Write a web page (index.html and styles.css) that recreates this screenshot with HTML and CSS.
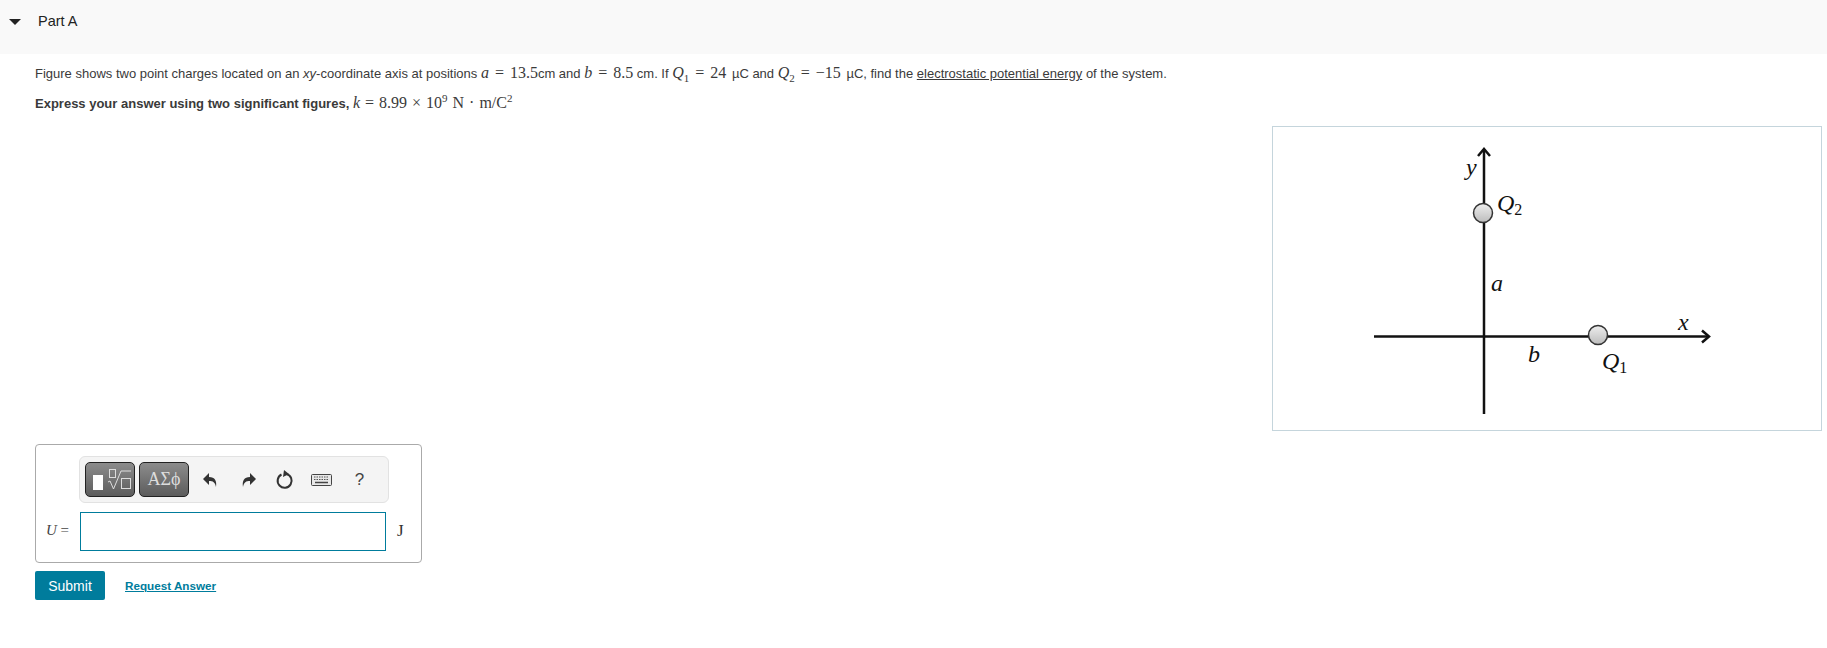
FILE: index.html
```html
<!DOCTYPE html>
<html lang="en">
<head>
    <meta charset="UTF-8">
    <title>Part A</title>
    <link rel="stylesheet" href="styles.css">
</head>
<body>
    <div class="part-header">
        <span class="caret"></span>
        <span class="part-title">Part A</span>
    </div>

    <div class="part-body">
        <p class="prompt">Figure shows two point charges located on an <i>xy</i>-coordinate axis at positions <span class="math"><i>a</i> = 13.5</span>cm and <span class="math"><i>b</i> = 8.5</span> cm. If <span class="math math-q"><i>Q</i><sub>1</sub> = 24</span> µC and <span class="math math-q"><i>Q</i><sub>2</sub> = −15</span> µC, find the <u>electrostatic potential energy</u> of the system.</p>
        <p class="instructions"><b>Express your answer using two significant figures,</b> <span class="math"><i>k</i> = 8.99 × 10<sup>9</sup> N · m/C<sup>2</sup></span></p>

        <div class="figure">
            <svg width="549" height="304" viewBox="0 0 549 304">
                <defs>
                    <linearGradient id="charge" x1="0" y1="0" x2="0" y2="1">
                        <stop offset="0" stop-color="#eeeeee"/>
                        <stop offset="1" stop-color="#bcbcbc"/>
                    </linearGradient>
                </defs>
                <g stroke="#111" stroke-width="2.500" fill="none">
                    <path d="M211 288V24"/>
                    <path d="M205 30l6-7 6 7"/>
                    <path d="M101 210.500H436"/>
                    <path d="M429 204.500l7 6-7 6"/>
                </g>
                <g stroke="#333" stroke-width="1.500" fill="url(#charge)">
                    <circle cx="210" cy="87" r="9.500"/>
                    <circle cx="325" cy="209" r="9.500"/>
                </g>
                <g class="fig-label">
                    <text x="193" y="49">y</text>
                    <text x="224" y="85">Q<tspan class="fig-sub" dy="4">2</tspan></text>
                    <text x="218" y="165">a</text>
                    <text x="255" y="236">b</text>
                    <text x="329" y="243">Q<tspan class="fig-sub" dy="4">1</tspan></text>
                    <text x="405" y="204">x</text>
                </g>
            </svg>
        </div>

        <div class="answer-box">
            <div class="toolbar">
                <button class="tool-btn tool-template">
                    <svg width="48" height="33" viewBox="0 0 48 33">
                        <rect x="7" y="12" width="10" height="15" fill="#fff"/>
                        <g stroke="#ddd" fill="none">
                            <rect x="23.500" y="6.500" width="6" height="8"/>
                            <path d="M22 19l2-1 3.500 8 7.500-18h10"/>
                            <rect x="35.500" y="15.500" width="9" height="10"/>
                        </g>
                    </svg>
                </button>
                <button class="tool-btn tool-symbols">ΑΣϕ</button>
                <span class="tool-icon">
                    <svg width="18" height="18" viewBox="0 0 18 18"><path d="M7 2L1 8l6 6v-4c4 0 6 1 7 6 1-6-1-10-7-10z" fill="#333"/></svg>
                </span>
                <span class="tool-icon">
                    <svg width="18" height="18" viewBox="0 0 18 18"><path d="M11 2l6 6-6 6v-4c-4 0-6 1-7 6-1-6 1-10 7-10z" fill="#333"/></svg>
                </span>
                <span class="tool-icon">
                    <svg width="20" height="20" viewBox="0 0 20 20"><path d="M6.500 4.500a7 7 0 1 0 5-.5" fill="none" stroke="#333" stroke-width="2"/><path d="M9 0l5 4-6 3z" fill="#333"/></svg>
                </span>
                <span class="tool-icon">
                    <svg width="21" height="12" viewBox="0 0 21 12"><rect x=".5" y=".5" width="20" height="11" rx="1" fill="#e8e8e8" stroke="#444"/><path d="M3 3h15M3 5.500h15" stroke="#555" stroke-dasharray="1.500 1"/><path d="M4 8.500h13" stroke="#444" stroke-width="1.500"/></svg>
                </span>
                <span class="tool-icon tool-help">?</span>
            </div>
            <div class="answer-row">
                <span class="answer-label"><i>U</i> =</span>
                <input class="answer-input" type="text">
                <span class="answer-unit">J</span>
            </div>
        </div>

        <div class="actions">
            <button class="submit">Submit</button>
            <a class="request" href="#">Request Answer</a>
        </div>
    </div>
</body>
</html>
```

FILE: styles.css
```css
body {
    margin: 0;
    font-family: "Liberation Sans", Arial, sans-serif;
    font-size: 13px;
    color: #3a3a3a;
    background: #fff;
}

.part-header {
    height: 54px;
    background: #f9f9f9;
    box-sizing: border-box;
    padding: 13px 0 0 9px;
    display: flex;
    align-items: flex-start;
}

.caret {
    width: 0;
    height: 0;
    margin-top: 6px;
    border: 6px solid transparent;
    border-top: 6px solid #222;
    border-bottom: 0;
}

.part-title {
    margin-left: 17px;
    font-size: 14.500px;
    color: #222;
}

.part-body {
    padding: 0 5px 0 35px;
}

p {
    margin: 0;
}

.prompt {
    padding-top: 9px;
    line-height: 19px;
}

.instructions {
    padding-top: 10px;
    line-height: 20px;
}

.math {
    font-family: "Liberation Serif", "Times New Roman", serif;
    font-size: 16px;
    word-spacing: 2px;
}

.math-q {
    margin-right: 2px;
}

.instructions .math {
    word-spacing: 1px;
}

sub, sup {
    font-size: 11px;
    line-height: 0;
}

.figure {
    width: 550px;
    height: 305px;
    margin: 12px 0 0 auto;
    border: 1px solid #c5d5dc;
    box-sizing: border-box;
}

.figure svg {
    display: block;
    margin-top: -1px;
}

.fig-label text {
    font-family: "Liberation Serif", serif;
    font-style: italic;
    font-size: 24px;
    fill: #111;
}

.fig-label .fig-sub {
    font-style: normal;
    font-size: 16px;
}

.answer-box {
    width: 387px;
    height: 119px;
    margin-top: 13px;
    box-sizing: border-box;
    border: 1px solid #aaa;
    border-radius: 4px;
    padding: 11px 0 0 43px;
}

.toolbar {
    width: 310px;
    height: 47px;
    box-sizing: border-box;
    background: #f4f4f4;
    border: 1px solid #e2e2e2;
    border-radius: 6px;
    padding: 5px;
    display: flex;
    align-items: center;
}

.tool-btn {
    height: 35px;
    box-sizing: border-box;
    padding: 0;
    border: 1px solid #222;
    border-radius: 5px;
    background: linear-gradient(#8c8c8c, #5c5c5c);
    color: #ddd;
    display: flex;
    align-items: center;
    justify-content: center;
}

.tool-template {
    width: 50px;
}

.tool-symbols {
    width: 50px;
    margin-left: 4px;
    font-family: "Liberation Serif", serif;
    font-size: 18px;
}

.tool-icon {
    width: 37px;
    display: flex;
    justify-content: center;
    align-items: center;
}

.tool-icon:nth-of-type(1) {
    margin-left: 3px;
}

.tool-help {
    font-size: 17px;
    color: #444;
    margin-left: 1px;
}

.answer-row {
    display: flex;
    align-items: center;
    margin-top: 9px;
    margin-left: -33px;
}

.answer-label {
    width: 34px;
    padding-bottom: 2px;
    font-family: "Liberation Serif", serif;
    font-size: 15px;
    color: #444;
}

.answer-input {
    width: 306px;
    height: 39px;
    box-sizing: border-box;
    border: 1px solid #007c9c;
    outline: none;
    padding: 0;
    margin: 0;
}

.answer-unit {
    margin-left: 11px;
    padding-bottom: 2px;
    font-family: "Liberation Serif", serif;
    font-size: 17px;
    color: #333;
}

.actions {
    display: flex;
    align-items: center;
    margin-top: 8px;
}

.submit {
    width: 70px;
    height: 29px;
    border: 0;
    border-radius: 2px;
    background: #007c9c;
    color: #fff;
    font-family: "Liberation Sans", Arial, sans-serif;
    font-size: 14px;
}

.request {
    margin-left: 20px;
    color: #007c9c;
    font-size: 11.700px;
    font-weight: bold;
}
```
